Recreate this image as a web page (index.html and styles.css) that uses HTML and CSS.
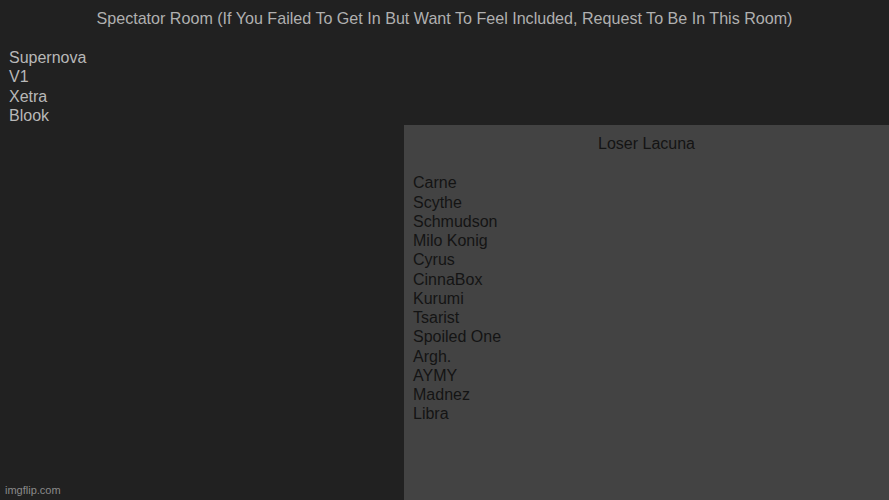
FILE: index.html
```html
<!DOCTYPE html>
<html>
<head>
<meta charset="utf-8">
<link rel="stylesheet" href="styles.css">
</head>
<body>
<div class="page">
  <div class="title">Spectator Room (If You Failed To Get In But Want To Feel Included, Request To Be In This Room)</div>
  <ul class="names">
    <li>Supernova</li>
    <li>V1</li>
    <li>Xetra</li>
    <li>Blook</li>
  </ul>
  <div class="panel">
    <div class="panel-title">Loser Lacuna</div>
    <ul class="panel-names">
      <li>Carne</li>
      <li>Scythe</li>
      <li>Schmudson</li>
      <li>Milo Konig</li>
      <li>Cyrus</li>
      <li>CinnaBox</li>
      <li>Kurumi</li>
      <li>Tsarist</li>
      <li>Spoiled One</li>
      <li>Argh.</li>
      <li>AYMY</li>
      <li>Madnez</li>
      <li>Libra</li>
    </ul>
  </div>
  <div class="watermark">imgflip.com</div>
</div>
</body>
</html>
```
FILE: styles.css
```css
html, body {
  margin: 0;
  padding: 0;
  background: #212121;
}
.page {
  position: relative;
  width: 889px;
  height: 500px;
  display: flex;
  flex-direction: column;
  font-family: "Liberation Sans", Arial, sans-serif;
  font-size: 16px;
  line-height: 19.25px;
  color: #b8b8b8;
  overflow: hidden;
}
.title {
  text-align: center;
  padding-top: 9px;
  height: 48px;
  box-sizing: border-box;
  font-size: 16.1px;
  color: #b0b0b0;
}
.names, .panel-names {
  list-style: none;
  margin: 0;
  padding: 0;
}
.names {
  padding-left: 9px;
}
.panel {
  margin-left: 404px;
  flex: 1;
  background: #434343;
  color: #141414;
  padding: 8.5px 9px 0;
}
.panel-title {
  text-align: center;
  margin-bottom: 20.5px;
}
.watermark {
  position: absolute;
  left: 5px;
  bottom: 3px;
  font-size: 11px;
  line-height: 13px;
  color: #8a8a8a;
}
```
